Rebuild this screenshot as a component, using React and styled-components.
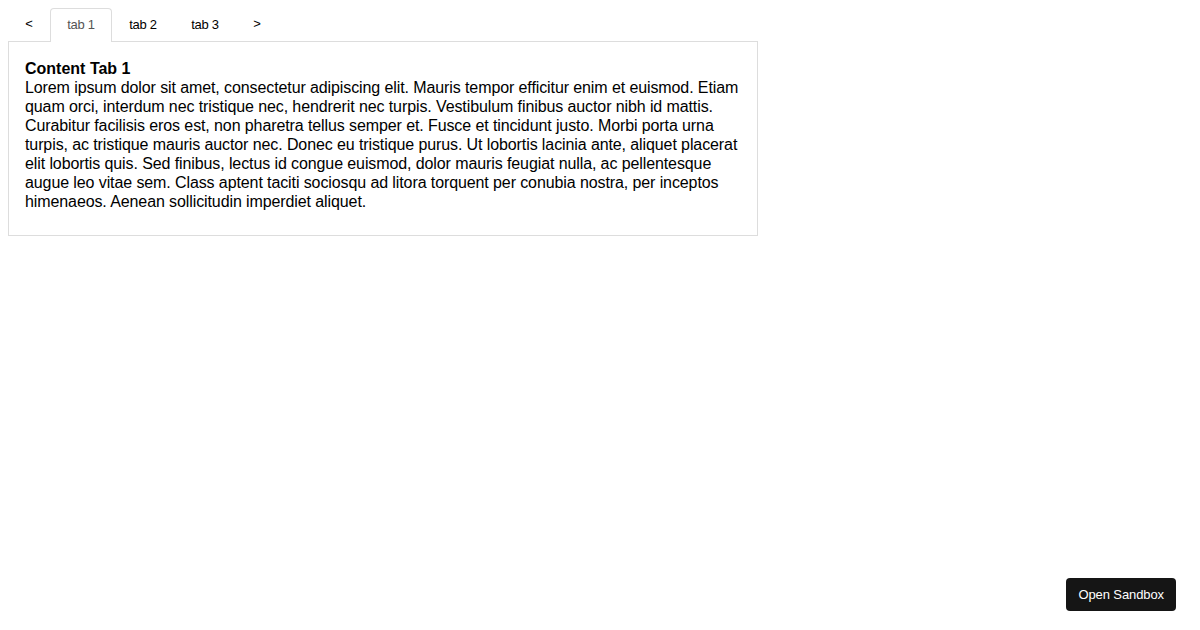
import React, { useState } from 'react';
import styled, { createGlobalStyle } from 'styled-components';

const GlobalStyle = createGlobalStyle`
  body {
    margin: 8px;
    background: #fff;
    font-family: "Liberation Sans", Arial, sans-serif;
    color: #000;
  }
`;

const Wrapper = styled.div`
  width: 750px;
`;

const TabBar = styled.div`
  display: flex;
  align-items: flex-end;
  height: 33px;
`;

const ArrowButton = styled.button`
  width: 42px;
  height: 33px;
  border: none;
  background: transparent;
  font-family: inherit;
  font-size: 13px;
  color: #000;
  padding: 0 0 2px;
  cursor: pointer;
`;

const Tab = styled.button`
  box-sizing: border-box;
  width: 62px;
  height: ${(p) => (p.$active ? '34px' : '33px')};
  margin-bottom: ${(p) => (p.$active ? '-1px' : '0')};
  padding: 0 0 ${(p) => (p.$active ? '3px' : '2px')};
  font-family: inherit;
  font-size: 13px;
  letter-spacing: -0.3px;
  color: ${(p) => (p.$active ? '#555' : '#000')};
  background: #fff;
  border: 1px solid ${(p) => (p.$active ? '#ddd' : 'transparent')};
  border-bottom: none;
  border-radius: 4px 4px 0 0;
  position: relative;
  z-index: 1;
  cursor: pointer;
`;

const Panel = styled.div`
  border: 1px solid #ddd;
  padding: 18px 16px 24px;
`;

const Heading = styled.div`
  font-weight: bold;
  font-size: 16px;
`;

const Body = styled.div`
  font-size: 16px;
  line-height: 19px;
  letter-spacing: -0.1px;
`;

const SandboxButton = styled.button`
  position: fixed;
  right: 24px;
  bottom: 19px;
  height: 33px;
  padding: 0 12px;
  background: #151515;
  color: #fff;
  border: none;
  border-radius: 4px;
  font-family: "Liberation Sans", Arial, sans-serif;
  font-size: 13px;
  letter-spacing: -0.1px;
`;

const tabs = [
  { label: 'tab 1', title: 'Content Tab 1' },
  { label: 'tab 2', title: 'Content Tab 2' },
  { label: 'tab 3', title: 'Content Tab 3' },
];

const lorem =
  'Lorem ipsum dolor sit amet, consectetur adipiscing elit. Mauris tempor efficitur enim et euismod. Etiam quam orci, interdum nec tristique nec, hendrerit nec turpis. Vestibulum finibus auctor nibh id mattis. Curabitur facilisis eros est, non pharetra tellus semper et. Fusce et tincidunt justo. Morbi porta urna turpis, ac tristique mauris auctor nec. Donec eu tristique purus. Ut lobortis lacinia ante, aliquet placerat elit lobortis quis. Sed finibus, lectus id congue euismod, dolor mauris feugiat nulla, ac pellentesque augue leo vitae sem. Class aptent taciti sociosqu ad litora torquent per conubia nostra, per inceptos himenaeos. Aenean sollicitudin imperdiet aliquet.';

const App = () => {
  const [active, setActive] = useState(0);
  return (
    <>
      <GlobalStyle />
      <Wrapper>
        <TabBar>
          <ArrowButton onClick={() => setActive((a) => Math.max(0, a - 1))}>&lt;</ArrowButton>
          {tabs.map((t, i) => (
            <Tab key={t.label} $active={i === active} onClick={() => setActive(i)}>
              {t.label}
            </Tab>
          ))}
          <ArrowButton onClick={() => setActive((a) => Math.min(tabs.length - 1, a + 1))}>&gt;</ArrowButton>
        </TabBar>
        <Panel>
          <Heading>{tabs[active].title}</Heading>
          <Body>{lorem}</Body>
        </Panel>
      </Wrapper>
      <SandboxButton>Open Sandbox</SandboxButton>
    </>
  );
};

export default App;
